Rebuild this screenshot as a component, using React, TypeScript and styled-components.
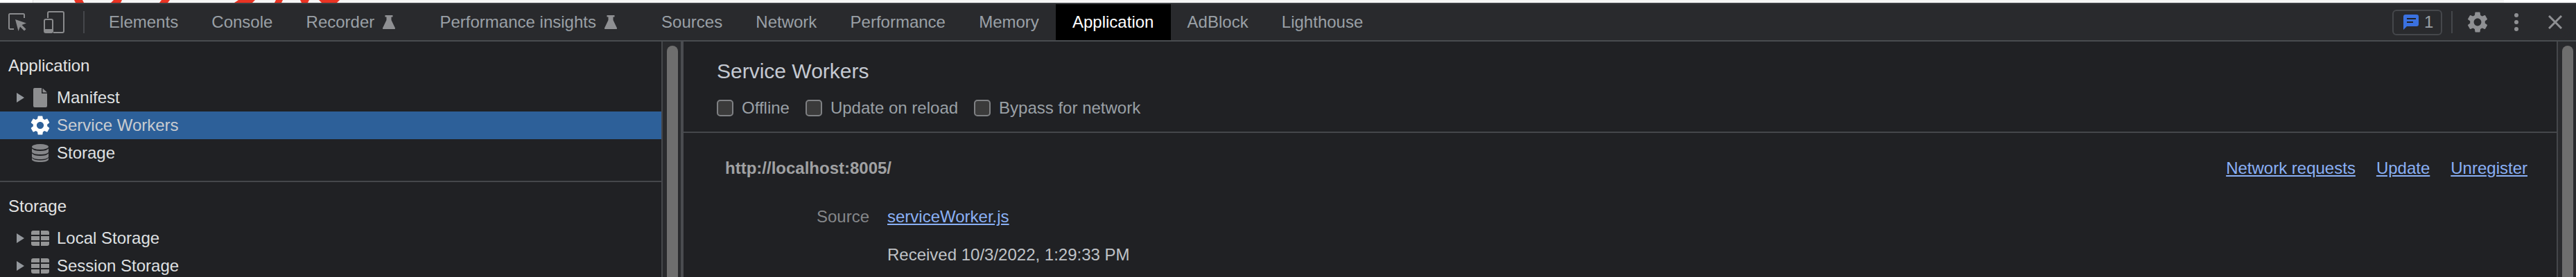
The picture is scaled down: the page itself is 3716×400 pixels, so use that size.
import React from "react";
import styled, { createGlobalStyle } from "styled-components";

const GlobalStyle = createGlobalStyle`
  html, body {
    margin: 0;
    padding: 0;
    background: #202124;
  }
  body {
    font-family: "Liberation Sans", Arial, sans-serif;
    font-size: 24px;
  }
`;

const tabs = [
  { name: "Elements" },
  { name: "Console" },
  { name: "Recorder", flask: true },
  { name: "Performance insights", flask: true },
  { name: "Sources" },
  { name: "Network" },
  { name: "Performance" },
  { name: "Memory" },
  { name: "Application", active: true },
  { name: "AdBlock" },
  { name: "Lighthouse" },
];

const GEAR =
  "M19.14 12.94c.04-.3.06-.61.06-.94 0-.32-.02-.64-.07-.94l2.03-1.58c.18-.14.23-.41.12-.61l-1.92-3.32c-.12-.22-.37-.29-.59-.22l-2.39.96c-.5-.38-1.03-.7-1.62-.94l-.36-2.54c-.04-.24-.24-.41-.48-.41h-3.84c-.24 0-.43.17-.47.41l-.36 2.54c-.59.24-1.13.57-1.62.94l-2.39-.96c-.22-.08-.47 0-.59.22L2.74 8.87c-.12.21-.08.47.12.61l2.03 1.58c-.05.3-.09.63-.09.94s.02.64.07.94l-2.03 1.58c-.18.14-.23.41-.12.61l1.92 3.32c.12.22.37.29.59.22l2.39-.96c.5.38 1.03.7 1.62.94l.36 2.54c.05.24.24.41.48.41h3.84c.24 0 .44-.17.47-.41l.36-2.54c.59-.24 1.13-.56 1.62-.94l2.39.96c.22.08.47 0 .59-.22l1.92-3.32c.12-.22.07-.47-.12-.61l-2.01-1.58zM12 15.6c-1.98 0-3.6-1.62-3.6-3.6s1.62-3.6 3.6-3.6 3.6 1.62 3.6 3.6-1.62 3.6-3.6 3.6z";

const InspectIcon = () => (
  <svg width="30" height="30" viewBox="0 0 30 30" fill="none">
    <path d="M9 25H3.5a1.5 1.5 0 0 1-1.5-1.5v-19A1.5 1.5 0 0 1 3.5 3h19A1.5 1.5 0 0 1 24 4.5V9" stroke="#8a8b8d" strokeWidth="2" />
    <path d="M11 11l16 5.5-6.5 2.5 6 6-2.5 2.5-6-6-2.5 6.500z" fill="#8a8b8d" />
  </svg>
);

const DeviceIcon = () => (
  <svg width="30" height="32" viewBox="0 0 30 32" fill="none">
    <path d="M6 10V3a2 2 0 0 1 2-2h19a2 2 0 0 1 2 2v26a2 2 0 0 1-2 2H14" stroke="#8a8b8d" strokeWidth="2" />
    <rect x="1" y="12" width="12" height="19" rx="2" stroke="#8a8b8d" strokeWidth="2" />
    <rect x="2" y="26" width="10" height="4" fill="#8a8b8d" />
  </svg>
);

const FlaskIcon = () => (
  <svg width="18" height="20" viewBox="0 0 18 20" fill="#8f9093">
    <path d="M3.500 0h11v2.500h-2v4.500L18 18.500a1 1 0 0 1-1 1.500H1a1 1 0 0 1-1-1.500L5.500 7V2.500h-2z" />
  </svg>
);

const ChatIcon = () => (
  <svg width="22" height="22" viewBox="0 0 22 22">
    <path d="M3 0h16a3 3 0 0 1 3 3v11a3 3 0 0 1-3 3H5l-5 5V3a3 3 0 0 1 3-3z" fill="#3a71e0" />
    <rect x="5" y="5" width="13" height="2" fill="#202124" />
    <rect x="5" y="10" width="9" height="2" fill="#202124" />
  </svg>
);

const GearIcon = ({ size, color }: { size: number; color: string }) => (
  <svg width={size} height={size} viewBox="0 0 24 24" fill={color}>
    <path d={GEAR} />
  </svg>
);

const DotsIcon = () => (
  <svg width="8" height="28" viewBox="0 0 8 28" fill="#8f9093">
    <circle cx="4" cy="4" r="3" />
    <circle cx="4" cy="14" r="3" />
    <circle cx="4" cy="24" r="3" />
  </svg>
);

const CloseIcon = () => (
  <svg width="20" height="20" viewBox="0 0 20 20" stroke="#8f9093" strokeWidth="3">
    <path d="M1 1l18 18M19 1L1 19" />
  </svg>
);

const DocIcon = () => (
  <svg width="20" height="28" viewBox="0 0 20 28" fill="#8d8e90">
    <path d="M2 0h10v8h8v18a2 2 0 0 1-2 2H2a2 2 0 0 1-2-2V2a2 2 0 0 1 2-2z" />
    <path d="M13.500 0.500L20 6.500h-6.500z" />
  </svg>
);

const DbIcon = () => (
  <svg width="24" height="26" viewBox="0 0 24 26" fill="#858689">
    <ellipse cx="12" cy="4" rx="12" ry="4" />
    <path d="M0 6.500c2 2.500 6 3.500 12 3.500s10-1 12-3.500V11c0 2.500-5 4-12 4S0 13.500 0 11z" />
    <path d="M0 13.500c2 2.500 6 3.500 12 3.500s10-1 12-3.500V18c0 2.500-5 4-12 4S0 20.500 0 18z" />
    <path d="M0 20c2 2.500 6 3.500 12 3.500S22 22.500 24 20v2c0 2.500-5 4-12 4S0 24.500 0 22z" />
  </svg>
);

const GridIcon = () => (
  <svg width="26" height="22" viewBox="0 0 26 22" fill="#949596">
    <path d="M3 0h9v6H0V3a3 3 0 0 1 3-3z" />
    <path d="M14 0h9a3 3 0 0 1 3 3v3H14z" />
    <rect x="0" y="8" width="12" height="6" />
    <rect x="14" y="8" width="12" height="6" />
    <path d="M0 16h12v6H3a3 3 0 0 1-3-3z" />
    <path d="M14 16h12v3a3 3 0 0 1-3 3h-9z" />
  </svg>
);

const RedMarks = () => (
  <svg width="452" height="4" viewBox="48 0 452 4" fill="#ea3323">
    <polygon points="107,0 119,0 121,4 109,4" />
    <polygon points="160,4 164,0 176,0 174,4" />
    <polygon points="230,4 233,0 245,0 242,4" />
    <polygon points="338,4 344,0 368,0 364,4" />
    <polygon points="396,4 398,0 408,0 406,4" />
    <polygon points="433,0 446,0 444,4 435,4" />
    <polygon points="460,0 490,0 486,4 464,4" />
  </svg>
);

const App = () => {
  return (
    <>
      <GlobalStyle />
      <Page>
        <TopStrip>
          <Gutter />
          <PageArea>
            <RedMarks />
          </PageArea>
          <RightCorner />
        </TopStrip>
        <Toolbar>
          <ToolIcon $width={52}>
            <InspectIcon />
          </ToolIcon>
          <ToolIcon $width={52}>
            <DeviceIcon />
          </ToolIcon>
          <Separator $left={16} $right={11} />
          {tabs.map((tab) => (
            <Tab key={tab.name} $active={tab.active}>
              {tab.name}
              {tab.flask && (
                <FlaskSlot>
                  <FlaskIcon />
                </FlaskSlot>
              )}
            </Tab>
          ))}
          <ToolbarRight>
            <IssuesBadge>
              <ChatIcon />
              <span>1</span>
            </IssuesBadge>
            <Separator $left={13} $right={8} />
            <ToolIcon $width={56}>
              <GearIcon size={36} color="#8f9093" />
            </ToolIcon>
            <ToolIcon $width={56}>
              <DotsIcon />
            </ToolIcon>
            <ToolIcon $width={56}>
              <CloseIcon />
            </ToolIcon>
          </ToolbarRight>
        </Toolbar>
        <Body>
          <Sidebar>
            <SideSection>
              <SideTitle>Application</SideTitle>
              <TreeRow>
                <Arrow />
                <IconSlot>
                  <DocIcon />
                </IconSlot>
                Manifest
              </TreeRow>
              <TreeRow $selected>
                <ArrowSpace />
                <IconSlot>
                  <GearIcon size={34} color="#ffffff" />
                </IconSlot>
                Service Workers
              </TreeRow>
              <TreeRow>
                <ArrowSpace />
                <IconSlot>
                  <DbIcon />
                </IconSlot>
                Storage
              </TreeRow>
            </SideSection>
            <SideSection>
              <SideTitle>Storage</SideTitle>
              <TreeRow>
                <Arrow />
                <IconSlot>
                  <GridIcon />
                </IconSlot>
                Local Storage
              </TreeRow>
              <TreeRow>
                <Arrow />
                <IconSlot>
                  <GridIcon />
                </IconSlot>
                Session Storage
              </TreeRow>
            </SideSection>
          </Sidebar>
          <ScrollTrack>
            <ScrollThumb />
          </ScrollTrack>
          <Main>
            <MainHeader>
              <MainTitle>Service Workers</MainTitle>
              <Options>
                <Option>
                  <Check />
                  Offline
                </Option>
                <Option>
                  <Check />
                  Update on reload
                </Option>
                <Option>
                  <Check />
                  Bypass for network
                </Option>
              </Options>
            </MainHeader>
            <Worker>
              <WorkerHead>
                <Origin>http://localhost:8005/</Origin>
                <Links>
                  <LinkText>Network requests</LinkText>
                  <LinkText>Update</LinkText>
                  <LinkText>Unregister</LinkText>
                </Links>
              </WorkerHead>
              <InfoGrid>
                <InfoLabel>Source</InfoLabel>
                <LinkText>serviceWorker.js</LinkText>
                <span />
                <Received>Received 10/3/2022, 1:29:33 PM</Received>
              </InfoGrid>
            </Worker>
          </Main>
          <RightScroll>
            <ScrollThumb />
          </RightScroll>
        </Body>
      </Page>
    </>
  );
};

const Page = styled.div`
  width: 3716px;
  height: 400px;
  overflow: hidden;
  display: flex;
  flex-direction: column;
  background: #202124;
`;

const TopStrip = styled.div`
  height: 4px;
  flex: none;
  display: flex;
  background: #ffffff;
`;

const Gutter = styled.div`
  width: 47px;
  border-right: 1px solid #e0e0e0;
`;

const PageArea = styled.div`
  flex: 1;
  display: flex;
  background: #f5f5f5;
`;

const RightCorner = styled.div`
  width: 104px;
  background: #ffffff;
`;

const Toolbar = styled.div`
  height: 52px;
  flex: none;
  display: flex;
  align-items: stretch;
  background: #292a2d;
  border-top: 2px solid #3c3e42;
  border-bottom: 2px solid #494c50;
  color: #9aa0a6;
`;

const ToolIcon = styled.div<{ $width: number }>`
  width: ${(p) => p.$width}px;
  display: flex;
  align-items: center;
  justify-content: center;
`;

const Separator = styled.div<{ $left: number; $right: number }>`
  width: 2px;
  height: 32px;
  align-self: center;
  background: #45474b;
  margin-left: ${(p) => p.$left}px;
  margin-right: ${(p) => p.$right}px;
`;

const Tab = styled.div<{ $active?: boolean }>`
  display: flex;
  align-items: center;
  padding: 0 24.1px;
  white-space: nowrap;
  color: ${(p) => (p.$active ? "#ffffff" : "#9aa0a6")};
  background: ${(p) => (p.$active ? "#000000" : "transparent")};
`;

const FlaskSlot = styled.span`
  display: flex;
  margin-left: 12px;
  margin-right: 16px;
`;

const ToolbarRight = styled.div`
  margin-left: auto;
  padding-right: 2px;
  display: flex;
  align-items: stretch;
`;

const IssuesBadge = styled.div`
  box-sizing: border-box;
  width: 72px;
  height: 37px;
  align-self: center;
  display: flex;
  align-items: center;
  gap: 8px;
  padding-left: 14px;
  border: 2px solid #45474b;
  border-radius: 6px;
`;

const Body = styled.div`
  flex: 1;
  display: flex;
  min-height: 0;
`;

const Sidebar = styled.div`
  width: 954px;
  flex: none;
`;

const SideSection = styled.div`
  padding: 15px 0 20px;

  & + & {
    border-top: 2px solid #45474b;
  }
`;

const SideTitle = styled.div`
  height: 40px;
  line-height: 40px;
  padding-left: 12px;
  margin-bottom: 6px;
  color: #e3e3e3;
`;

const TreeRow = styled.div<{ $selected?: boolean }>`
  height: 40px;
  display: flex;
  align-items: center;
  padding-left: 24px;
  white-space: nowrap;
  color: ${(p) => (p.$selected ? "#c9ccd0" : "#dfe0e2")};
  background: ${(p) => (p.$selected ? "#2d6099" : "transparent")};
`;

const Arrow = styled.span`
  width: 0;
  height: 0;
  flex: none;
  margin-right: 9px;
  border-left: 11px solid #94989d;
  border-top: 7px solid transparent;
  border-bottom: 7px solid transparent;
`;

const ArrowSpace = styled.span`
  width: 20px;
  flex: none;
`;

const IconSlot = styled.span`
  width: 28px;
  margin-right: 10px;
  flex: none;
  display: flex;
  align-items: center;
  justify-content: center;

  svg {
    flex: none;
  }
`;

const ScrollTrack = styled.div`
  width: 20px;
  flex: none;
  padding: 6px 0 0 6px;
  display: flex;
  background: #292a2d;
  border-left: 2px solid #45474b;
  border-right: 4px solid #4a4c50;
`;

const RightScroll = styled(ScrollTrack)`
  border-right: none;
`;

const ScrollThumb = styled.div`
  width: 16px;
  height: 100%;
  background: #6e6e6e;
  border-radius: 8px 8px 0 0;
`;

const Main = styled.div`
  flex: 1;
  min-width: 0;
`;

const MainHeader = styled.div`
  box-sizing: border-box;
  height: 132px;
  padding: 23px 0 0 48px;
  border-bottom: 2px solid #45474b;
`;

const MainTitle = styled.div`
  font-size: 30px;
  line-height: 40px;
  color: #c4c9d1;
`;

const Options = styled.div`
  display: flex;
  gap: 23px;
  height: 32px;
  margin-top: 17px;
  color: #9aa0a6;
`;

const Option = styled.label`
  display: flex;
  align-items: center;
  gap: 12px;
`;

const Check = styled.span`
  box-sizing: border-box;
  width: 24px;
  height: 24px;
  border: 2px solid #7f8184;
  border-radius: 5px;
  background: #3b3b3b;
`;

const Worker = styled.div`
  padding: 31px 42px 0 60px;
`;

const WorkerHead = styled.div`
  height: 40px;
  display: flex;
  align-items: center;
  justify-content: space-between;
`;

const Origin = styled.div`
  font-weight: 700;
  color: #a0a1a3;
`;

const Links = styled.div`
  display: flex;
  gap: 30px;
`;

const LinkText = styled.span`
  color: #8ab0f5;
  text-decoration: underline;
`;

const InfoGrid = styled.div`
  display: grid;
  grid-template-columns: 208px 1fr;
  column-gap: 26px;
  row-gap: 15px;
  grid-auto-rows: 40px;
  align-items: center;
  margin-top: 30px;
`;

const InfoLabel = styled.div`
  text-align: right;
  color: #85878a;
`;

const Received = styled.div`
  color: #bfc2c6;
`;

export default App;
